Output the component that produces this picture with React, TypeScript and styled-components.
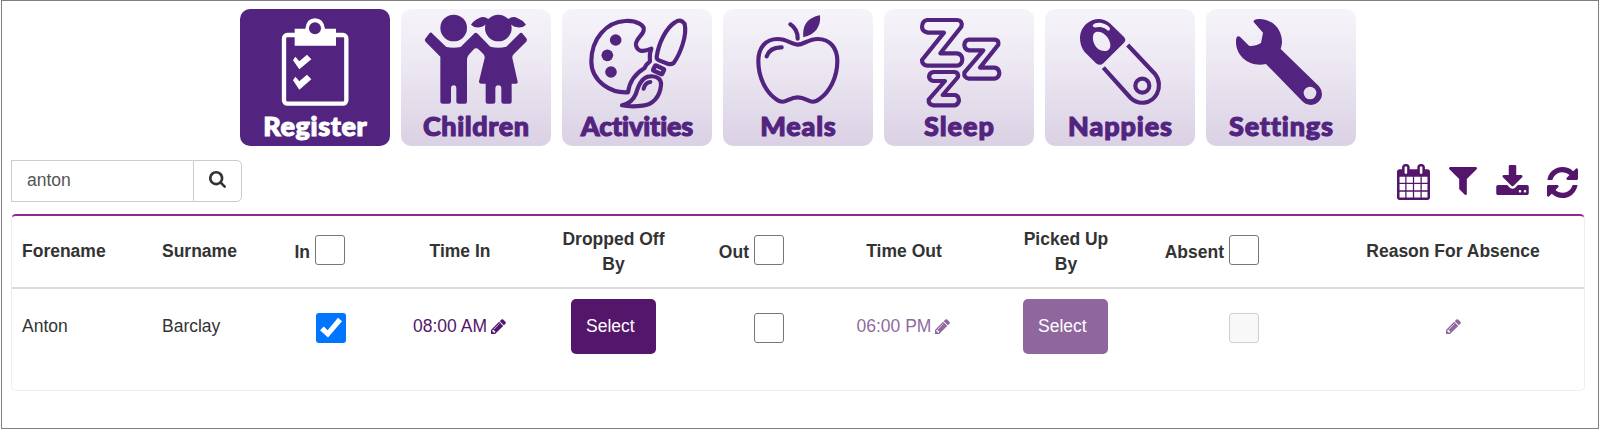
import React from "react";
import styled, { createGlobalStyle } from "styled-components";

const GlobalStyle = createGlobalStyle`
  * { box-sizing: border-box; }
  body {
    margin: 0;
    background: #fff;
    color: #333;
    font-family: "Liberation Sans", Arial, sans-serif;
    font-size: 17.5px;
    line-height: 25px;
  }
`;

const NAV = "#52247f";
const BRAND = "#54166b";

const Page = styled.div`
  width: 1598px;
  height: 429px;
  margin-left: 1px;
  border: 1px solid #7f7f7f;
  padding: 8px 13px 0 9px;
`;

const Nav = styled.nav`
  display: flex;
  justify-content: center;
  gap: 11px;
`;

const Tile = styled.a<{ $active?: boolean }>`
  display: grid;
  width: 150px;
  height: 137px;
  border-radius: 10px;
  overflow: hidden;
  color: ${(p) => (p.$active ? "#fff" : NAV)};
  background: ${(p) =>
    p.$active ? NAV : "linear-gradient(#f6f4fa, #ebe6f1 45%, #dad1e4)"};
  & > * { grid-area: 1 / 1; }
`;

const TileArt = styled.svg`
  display: block;
  width: 150px;
  height: 137px;
  fill: none;
  stroke: currentColor;
  stroke-linecap: round;
  stroke-linejoin: round;
`;

const TileLabel = styled.span<{ $spacing: number }>`
  align-self: end;
  justify-self: center;
  white-space: nowrap;
  font: 900 27px/34px Lato, sans-serif;
  letter-spacing: ${(p) => p.$spacing}px;
  margin-right: ${(p) => -p.$spacing}px;
  margin-bottom: 3px;
  -webkit-text-stroke: 1.1px currentColor;
`;

const Toolbar = styled.div`
  display: flex;
  justify-content: space-between;
  height: 68px;
  padding-top: 14px;
`;

const SearchGroup = styled.form`
  display: flex;
  height: 42px;
`;

const SearchInput = styled.input`
  width: 182px;
  height: 42px;
  padding: 0 15px 2px;
  border: 1px solid #ccccd6;
  border-right: 0;
  font: inherit;
  color: #555;
  outline: 0;
`;

const SearchButton = styled.button`
  display: flex;
  align-items: center;
  justify-content: center;
  width: 49px;
  height: 42px;
  padding: 0 0 3px;
  border: 1px solid #ccc;
  border-radius: 0 5px 5px 0;
  background: #fff;
  color: #333;
`;

const Actions = styled.div`
  display: flex;
  align-items: flex-start;
  padding: 4px 7px 0 0;
  color: ${BRAND};
`;

const Glyph = styled.svg<{ $w: number; $h: number; $top?: number; $left?: number }>`
  flex: none;
  width: ${(p) => p.$w}px;
  height: ${(p) => p.$h}px;
  margin-top: ${(p) => p.$top ?? 0}px;
  margin-left: ${(p) => p.$left ?? 0}px;
  fill: currentColor;
`;

const Panel = styled.section`
  width: 1574px;
  height: 177px;
  border: 1px solid #eee;
  border-top: 2px solid #962590;
  border-radius: 5px;
`;

const Row = styled.div<{ $head?: boolean }>`
  display: grid;
  grid-template-columns: 140px 133px 85px 180px 127px 127px 200px 124px 194px 1fr;
  align-items: ${(p) => (p.$head ? "center" : "start")};
  height: ${(p) => (p.$head ? 73 : 101)}px;
  padding-top: ${(p) => (p.$head ? 0 : 10)}px;
  border-bottom: ${(p) => (p.$head ? "2px solid #ddd" : "0")};
  font-weight: ${(p) => (p.$head ? 700 : 400)};
`;

const Cell = styled.div<{ $align?: "center" | "end"; $right?: number; $top?: number; $bottom?: number }>`
  display: flex;
  align-items: center;
  justify-content: ${(p) => p.$align ?? "start"};
  gap: 5px;
  padding-left: ${(p) => (p.$align ? 0 : 10)}px;
  padding-right: ${(p) => p.$right ?? 0}px;
  padding-top: ${(p) => p.$top ?? 0}px;
  padding-bottom: ${(p) => p.$bottom ?? 0}px;
  text-align: center;
  white-space: nowrap;
`;

const CheckLabel = styled.span`
  padding-top: 4px;
`;

const Box = styled.span<{ $checked?: boolean; $disabled?: boolean }>`
  display: flex;
  align-items: center;
  justify-content: center;
  width: 30px;
  height: 30px;
  border-radius: 3px;
  border: ${(p) => (p.$checked ? "0" : p.$disabled ? "1px solid #cfcfcf" : "1px solid #767676")};
  background: ${(p) => (p.$checked ? "#0075ff" : p.$disabled ? "#f8f8f8" : "#fff")};
`;

const TimeLink = styled.a<{ $faded?: boolean }>`
  display: flex;
  align-items: center;
  gap: 4px;
  min-height: 25px;
  color: ${BRAND};
  opacity: ${(p) => (p.$faded ? 0.65 : 1)};
`;

const SelectButton = styled.button<{ $faded?: boolean }>`
  width: 85px;
  height: 55px;
  padding: 0 15px 1px;
  border: 0;
  border-radius: 5px;
  background: ${BRAND};
  color: #fff;
  font: inherit;
  text-align: left;
  opacity: ${(p) => (p.$faded ? 0.65 : 1)};
`;

const PATHS = {
  search:
    "M1216 832q0-185-131.5-316.5t-316.5-131.5-316.5 131.5-131.5 316.5 131.5 316.5 316.5 131.5 316.5-131.5 131.5-316.5zm512 832q0 52-38 90t-90 38q-54 0-90-38l-343-342q-179 124-399 124-143 0-273.5-55.5t-225-150-150-225-55.5-273.5 55.5-273.5 150-225 225-150 273.5-55.5 273.5 55.5 225 150 150 225 55.5 273.5q0 220-124 399l343 343q37 37 37 90z",
  calendar:
    "M192 1664h288v-288h-288v288zm352 0h320v-288h-320v288zm-352-352h288v-320h-288v320zm352 0h320v-320h-320v320zm-352-384h288v-288h-288v288zm736 736h320v-288h-320v288zm-384-736h320v-288h-320v288zm768 736h288v-288h-288v288zm-384-352h320v-320h-320v320zm-352-864v-288q0-13-9.5-22.5t-22.5-9.5h-64q-13 0-22.5 9.5t-9.5 22.5v288q0 13 9.5 22.5t22.5 9.5h64q13 0 22.5-9.5t9.5-22.5zm736 864h288v-320h-288v320zm-384-384h320v-288h-320v288zm384 0h288v-288h-288v288zm32-480v-288q0-13-9.5-22.5t-22.5-9.5h-64q-13 0-22.5 9.5t-9.5 22.5v288q0 13 9.5 22.5t22.5 9.5h64q13 0 22.5-9.5t9.5-22.5zm384-64v1280q0 52-38 90t-90 38h-1408q-52 0-90-38t-38-90v-1280q0-52 38-90t90-38h128v-96q0-66 47-113t113-47h64q66 0 113 47t47 113v96h384v-96q0-66 47-113t113-47h64q66 0 113 47t47 113v96h128q52 0 90 38t38 90z",
  filter:
    "M1595 295q17 41-14 70l-493 493v742q0 42-39 59-13 5-25 5-27 0-45-19l-256-256q-19-19-19-45v-486l-493-493q-31-29-14-70 17-39 59-39h1280q42 0 59 39z",
  download:
    "M1344 1344q0-26-19-45t-45-19-45 19-19 45 19 45 45 19 45-19 19-45zm256 0q0-26-19-45t-45-19-45 19-19 45 19 45 45 19 45-19 19-45zm128-224v320q0 40-28 68t-68 28h-1472q-40 0-68-28t-28-68v-320q0-40 28-68t68-28h465l135 136q58 56 136 56t136-56l136-136h464q40 0 68 28t28 68zm-325-569q17 41-14 70l-448 448q-18 19-45 19t-45-19l-448-448q-31-29-14-70 17-39 59-39h256v-448q0-26 19-45t45-19h256q26 0 45 19t19 45v448h256q42 0 59 39z",
  refresh:
    "M1639 1056q0 5-1 7-64 268-268 434.5t-478 166.5q-146 0-282.5-55t-243.5-157l-129 129q-19 19-45 19t-45-19-19-45v-448q0-26 19-45t45-19h448q26 0 45 19t19 45-19 45l-137 137q71 66 161 102t187 36q134 0 250-65t186-179q11-17 53-117 8-23 30-23h192q13 0 22.5 9.5t9.5 22.5zm25-800v448q0 26-19 45t-45 19h-448q-26 0-45-19t-19-45 19-45l138-138q-148-137-349-137-134 0-250 65t-186 179q-11 17-53 117-8 23-30 23h-199q-13 0-22.5-9.5t-9.5-22.5v-7q65-268 270-434.5t480-166.5q146 0 284 55.5t245 156.5l130-129q19-19 45-19t45 19 19 45z",
  pencil:
    "M491 1536l91-91-235-235-91 91v107h128v128h107zm523-928q0-22-22-22-10 0-17 7l-542 542q-7 7-7 17 0 22 22 22 10 0 17-7l542-542q7-7 7-17zm-54-192l416 416-832 832h-416v-416zm683 96q0 53-37 90l-166 166-416-416 166-165q36-38 90-38 53 0 91 38l235 234q37 39 37 91z",
};

const Pencil = () => (
  <Glyph $w={15} $h={15} viewBox="128 128 1536 1536">
    <path d={PATHS.pencil} />
  </Glyph>
);

const RegisterArt = () => (
  <TileArt viewBox="30 27 450 411">
    <rect x="162" y="105" width="187" height="206" rx="10" strokeWidth="13" />
    <path fill="currentColor" stroke="none" d="M194 86h32q4-31 29-31t30 31h33v51H194z" />
    <circle cx="255" cy="85" r="18" fill={NAV} stroke="none" />
    <g fill="currentColor" stroke="none">
      <path d="M196 170l12 14 23-20 13 14-36 30-19-27z" />
      <path d="M196 230l12 14 23-20 13 14-36 31-19-28z" />
    </g>
  </TileArt>
);

const ChildrenArt = () => (
  <TileArt viewBox="513 27 450 411">
    <g fill="currentColor" stroke="none">
      <circle cx="671" cy="84" r="40" />
      <circle cx="805" cy="84" r="40" />
      <path d="M776 58q-14-11-28-4-16 6-25 20 9 10 26 8 10-2 17-8l9-2zM834 58q14-11 28-4 16 6 26 20-9 10-26 8-11-2-18-8l-9-2z" />
      <path d="M606 100l43 41q22 5 43 0l40-40q5-5 11 0l38 39q24 6 48 0l39-39q5-5 10 0l11 14q4 6-1 11l-37 37q-5 5-4 11l16 71q1 6-6 6h-12v54q0 6-6 6h-18q-7 0-7-6v-39q0-10-9-10t-9 10v39q0 6-7 6h-16q-6 0-6-6v-54h-13q-8 0-7-7l17-70q1-6-4-12l-13-13q-9-8-17 0l-11 12q-8 8-8 15v129q0 6-6 6h-19q-7 0-7-6v-39q0-10-8-10t-8 10v39q0 6-7 6h-18q-7 0-7-6V170l-43-43q-6-6-2-11l11-15q5-6 10-1z" />
    </g>
  </TileArt>
);

const ActivitiesArt = () => (
  <TileArt viewBox="21 27 450 411" strokeWidth="12.5">
    <path d="M219 277C170 280 109 246 109 184C109 116 154 66 211 63C246 61 270 77 266 91C263 108 241 116 243 135C246 157 268 156 289 146C281 166 285 174 285 184Q272 194 269 204C239 222 223 246 219 277z" />
    <g fill="currentColor" stroke="none">
      <circle cx="182" cy="120" r="17.5" />
      <circle cx="157" cy="166" r="17.5" />
      <circle cx="168" cy="216" r="17.5" />
    </g>
    <path d="M305 171C310 132 333 83 360 67Q377 55 389 72C397 106 376 161 356 189Q349 194 340 192L312 181Q305 178 305 171z" />
    <rect x="296" y="201" width="30" height="17" rx="3" transform="rotate(25 311 209)" strokeWidth="13" />
    <path d="M201 316Q231 310 243 281C251 252 266 229 286 229C307 227 320 238 318 255C315 292 292 314 263 317Q230 322 201 316z" />
    <path d="M266 266Q270 248 286 246" />
  </TileArt>
);

const MealsArt = () => (
  <TileArt viewBox="504 27 450 411" strokeWidth="12.5">
    <path d="M728 134C710 133 696 117 668 117C631 117 610 144 610 183C610 235 634 276 661 296C690 319 697 292 728 292C759 292 766 319 795 296C822 276 847 235 847 183C847 144 825 117 788 117C762 117 746 133 728 134z" />
    <path d="M635 169Q645 141 680 142" />
    <path d="M706 73Q728 87 728 116" />
    <path d="M745 112C742 82 752 54 795 46C799 80 779 105 745 112z" fill="currentColor" stroke="none" />
  </TileArt>
);

const SleepArt = () => (
  <TileArt viewBox="12 27 450 411" strokeWidth="12.5">
    <path d="M141 60H231Q249 61 244 80L181 160H231Q246 162 247 178Q246 195 231 197H142Q126 195 126 180L192 98H144Q127 95 126 81Q127 62 141 60z" />
    <path d="M267 119H344Q357 121 355 134L300 203H344Q357 205 358 220Q357 234 343 236H267Q251 234 253 218L310 151H267Q254 149 253 135Q254 121 267 119z" />
    <path d="M160 216H224Q236 218 234 231L188 285H225Q236 287 237 301Q235 314 224 316H160Q145 314 146 299L195 243H160Q148 241 147 230Q148 218 160 216z" />
  </TileArt>
);

const NappiesArt = () => (
  <TileArt viewBox="495 27 450 411" strokeWidth="12.5">
    <path
      fill="currentColor" stroke="none" fillRule="evenodd"
      d="M600 111C602 80 628 57 658 57Q678 58 692 72L732 111Q740 120 732 128L670 190Q660 199 648 190L614 156Q599 137 600 111zM643 99C633 110 640 151 673 153C686 154 694 144 690 128C685 104 656 87 643 99zM638 76C640 88 652 79 664 82Q673 83 685 92Q690 93 690 85C684 71 649 60 638 76z"
    />
    <path strokeLinecap="butt" d="M743 135L825 222C839 239 840 263 831 281C814 314 774 315 752 294L670 203" />
    <circle cx="787" cy="257" r="21" />
  </TileArt>
);

const SettingsArt = () => (
  <TileArt viewBox="48 27 450 411">
    <path
      fill="currentColor" stroke="none" fillRule="evenodd"
      d="M191 66Q189 58 207 57C247 57 276 87 276 126Q276 136 272 147L387 259Q402 278 392 297C377 321 351 318 337 304L228 192C181 203 138 170 138 126Q137 105 150 110L177 137Q197 140 213 129L219 98zM379 279a19 19 0 1 0-38 0a19 19 0 1 0 38 0z"
    />
  </TileArt>
);

const TILES = [
  { label: "Register", spacing: 0.6, Art: RegisterArt, active: true },
  { label: "Children", spacing: 0.6, Art: ChildrenArt },
  { label: "Activities", spacing: -0.15, Art: ActivitiesArt },
  { label: "Meals", spacing: 0.8, Art: MealsArt },
  { label: "Sleep", spacing: 1, Art: SleepArt },
  { label: "Nappies", spacing: 0.9, Art: NappiesArt },
  { label: "Settings", spacing: 0.8, Art: SettingsArt },
];

export default function App() {
  return (
    <>
      <GlobalStyle />
      <Page>
        <Nav>
          {TILES.map(({ label, spacing, Art, active }) => (
            <Tile key={label} $active={active}>
              <Art />
              <TileLabel $spacing={spacing}>{label}</TileLabel>
            </Tile>
          ))}
        </Nav>

        <Toolbar>
          <SearchGroup>
            <SearchInput defaultValue="anton" />
            <SearchButton type="button" aria-label="Search">
              <Glyph $w={17} $h={17} viewBox="64 128 1664 1664">
                <path d={PATHS.search} />
              </Glyph>
            </SearchButton>
          </SearchGroup>
          <Actions>
            <Glyph $w={33} $h={36} viewBox="64 0 1664 1792" preserveAspectRatio="none">
              <path d={PATHS.calendar} />
            </Glyph>
            <Glyph $w={28} $h={28} $top={3} $left={19} viewBox="192 256 1408 1408">
              <path d={PATHS.filter} />
            </Glyph>
            <Glyph $w={33} $h={30} $top={1} $left={19} viewBox="64 0 1664 1536">
              <path d={PATHS.download} />
            </Glyph>
            <Glyph $w={31} $h={31} $top={3} $left={18} viewBox="128 128 1536 1536">
              <path d={PATHS.refresh} />
            </Glyph>
          </Actions>
        </Toolbar>

        <Panel>
          <Row $head>
            <Cell>Forename</Cell>
            <Cell>Surname</Cell>
            <Cell $align="end" $right={25} $bottom={3}>
              <CheckLabel>In</CheckLabel>
              <Box />
            </Cell>
            <Cell $align="center">Time In</Cell>
            <Cell $align="center">Dropped Off<br />By</Cell>
            <Cell $align="end" $right={20} $bottom={3}>
              <CheckLabel>Out</CheckLabel>
              <Box />
            </Cell>
            <Cell $align="center">Time Out</Cell>
            <Cell $align="center">Picked Up<br />By</Cell>
            <Cell $align="end" $right={63} $bottom={3}>
              <CheckLabel>Absent</CheckLabel>
              <Box />
            </Cell>
            <Cell $align="center">Reason For Absence</Cell>
          </Row>
          <Row>
            <Cell $top={15}>Anton</Cell>
            <Cell $top={15}>Barclay</Cell>
            <Cell $align="end" $right={24} $top={14}>
              <Box $checked>
                <svg width="30" height="30" viewBox="0 0 30 30">
                  <path d="M4 17.3L7.8 13.5L11.6 17.3L22 4.8L26 8.2L12 24.6z" fill="#fff" />
                </svg>
              </Box>
            </Cell>
            <Cell $align="center" $right={1} $top={15}>
              <TimeLink>08:00 AM <Pencil /></TimeLink>
            </Cell>
            <Cell $align="center"><SelectButton>Select</SelectButton></Cell>
            <Cell $align="end" $right={20} $top={14}><Box /></Cell>
            <Cell $align="center" $right={1} $top={15}>
              <TimeLink $faded>06:00 PM <Pencil /></TimeLink>
            </Cell>
            <Cell $align="center" $right={1}><SelectButton $faded>Select</SelectButton></Cell>
            <Cell $align="end" $right={63} $top={14}><Box $disabled /></Cell>
            <Cell $align="center" $top={15}>
              <TimeLink $faded><Pencil /></TimeLink>
            </Cell>
          </Row>
        </Panel>
      </Page>
    </>
  );
}
